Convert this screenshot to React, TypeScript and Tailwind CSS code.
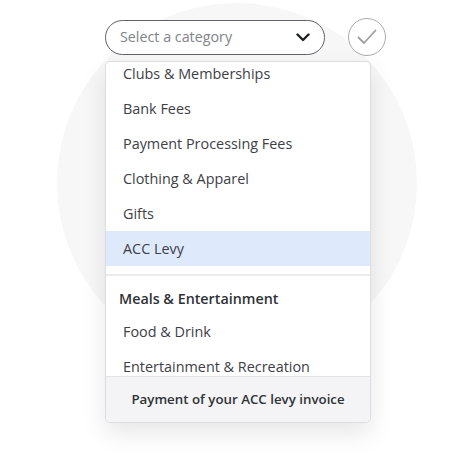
import React from 'react';

const items = ['Clubs & Memberships', 'Bank Fees', 'Payment Processing Fees', 'Clothing & Apparel', 'Gifts', 'ACC Levy'];
const meals = ['Food & Drink', 'Entertainment & Recreation'];

const App: React.FC = () => {
  return (
    <div className="relative w-[474px] h-[469px] overflow-hidden bg-white" style={{ fontFamily: '"Open Sans", "Noto Sans", sans-serif' }}>
      {/* soft backdrop circle */}
      <div className="absolute left-[57px] top-[3px] w-[360px] h-[360px] rounded-full bg-[#f7f7f8]"></div>

      <div className="relative flex flex-col pt-[18px] pl-[105px]">
        {/* select row */}
        <div className="flex items-center gap-[23px]">
          <div className="flex items-center justify-between w-[220px] h-[35px] rounded-full border-[1.5px] border-[#5f6266] bg-white pl-[14px] pr-[14px]">
            <span className="text-[14.3px] text-[#80848a] leading-none">Select a category</span>
            <svg width="14" height="9" viewBox="0 0 14 9" fill="none">
              <path d="M1.5 1.5 L7 7 L12.5 1.5" stroke="#1f2227" strokeWidth="2.4" strokeLinecap="round" strokeLinejoin="round" />
            </svg>
          </div>
          <div className="flex items-center justify-center w-[38px] h-[38px] rounded-full border-[1.5px] border-[#a9abae] bg-white">
            <svg width="20" height="16" viewBox="0 0 20 16" fill="none">
              <path d="M1.5 8.5 L7 14 L18.5 1.5" stroke="#9c9ea2" strokeWidth="1.8" strokeLinecap="round" strokeLinejoin="round" />
            </svg>
          </div>
        </div>

        {/* dropdown */}
        <div className="mt-[5px] w-[266px] h-[362px] flex flex-col rounded-[5px] border border-[#dcdde0] bg-white overflow-hidden shadow-[0_10px_24px_rgba(0,0,0,0.10)]">
          <div className="h-[314px] overflow-hidden">
            <div className="-mt-[6px] flex flex-col">
              {items.map((it) => (
                <div
                  key={it}
                  className={`h-[35px] flex items-center pl-[17px] text-[14.4px] text-[#3d4046] ${it === 'ACC Levy' ? 'bg-[#deeafb]' : ''}`}
                >
                  {it}
                </div>
              ))}
              <div className="mt-[8px] border-t-2 border-[#ececee]"></div>
              <div className="h-[38px] flex items-end pb-[5px] pl-[13px] text-[14.3px] font-semibold text-[#2f3237]">
                Meals &amp; Entertainment
              </div>
              {meals.map((it) => (
                <div key={it} className="h-[35px] flex items-center pl-[17px] text-[14.4px] text-[#3d4046]">
                  {it}
                </div>
              ))}
            </div>
          </div>
          <div className="flex-1 flex items-center justify-center border-t border-[#e3e4e7] bg-[#f4f4f6] text-[13.3px] font-semibold text-[#2f3237]">
            Payment of your ACC levy invoice
          </div>
        </div>
      </div>
    </div>
  );
};

export default App;
